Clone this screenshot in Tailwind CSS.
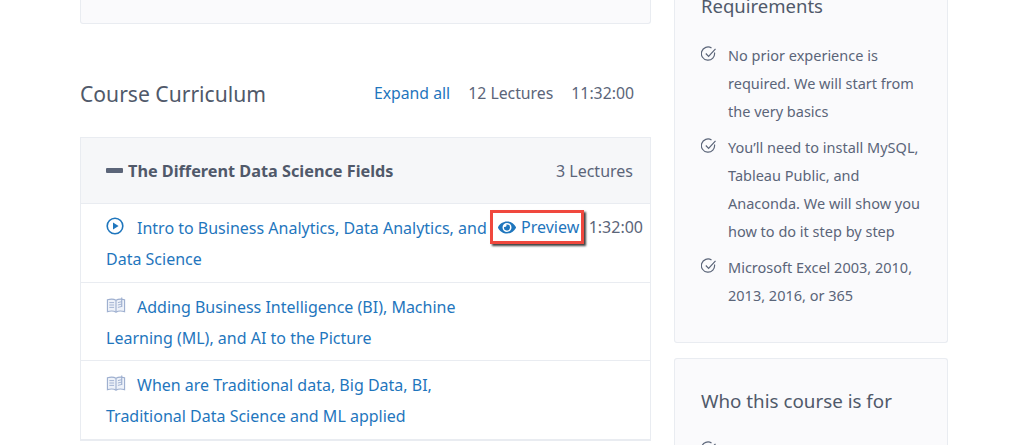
<!DOCTYPE html>
<html lang="en">

<head>
  <meta charset="UTF-8">
  <meta name="viewport" content="width=device-width, initial-scale=1.0">
  <script src="https://cdn.jsdelivr.net/npm/@tailwindcss/browser@4"></script>
  <title>Course Curriculum</title>
</head>

<body class="bg-white overflow-hidden h-[445px] font-['Noto_Sans','Open_Sans',sans-serif]">
  <div class="flex gap-[23px] pl-[80px] w-[948px] items-start">

    <!-- left column -->
    <div class="w-[571px] shrink-0">
      <div class="h-[24px] bg-[#fafafc] border border-t-0 border-[#e9ecf1] rounded-b-[3px]"></div>

      <div class="flex items-center justify-between mt-[55px] h-[30px] pr-[17px]">
        <h2 class="text-[21.100px] text-[#50596a]">Course Curriculum</h2>
        <div class="flex text-[15.800px] text-[#5b6579] gap-[18px]">
          <a href="#" class="text-[#1f76bd]">Expand all</a>
          <span>12 Lectures</span>
          <span>11:32:00</span>
        </div>
      </div>

      <div class="mt-[28px] border border-[#e9ecf1] border-b-2">
        <div class="h-[66px] bg-[#f6f7f9] border-b border-[#e9ecf1] flex items-center justify-between pl-[25px] pr-[17px]">
          <div class="flex items-center gap-[5px]">
            <span class="block w-[17px] h-[5px] bg-[#5b6579] rounded-[1px]"></span>
            <span class="pt-[1px] text-[16.250px] font-bold text-[#50596a]">The Different Data Science Fields</span>
          </div>
          <span class="pt-[1px] text-[16px] text-[#5b6579]">3 Lectures</span>
        </div>

        <div class="relative h-[79px] border-b border-[#e9ecf1] pl-[25px] pt-[9px] text-[16px] leading-[31px] text-[#1f76bd]">
          <div class="w-[390px]">
            <svg class="inline-block w-[18px] h-[18px] mr-[13px] align-[-1px]" viewBox="0 0 18 18" fill="none">
              <circle cx="9" cy="9" r="7.800" stroke="#1f76bd" stroke-width="1.600" />
              <path d="M7 5.400 12.600 9 7 12.600z" fill="#1f76bd" />
            </svg><a href="#">Intro to Business Analytics, Data Analytics, and Data Science</a>
          </div>
          <div class="absolute left-[409px] top-[6px] w-[153px] flex items-center justify-between">
            <a href="#" class="flex items-center gap-[5px] h-[34px] w-[94px] pl-[5px] border-[3px] border-[#f0483e] shadow-[2px_2px_2px_rgba(0,0,0,0.75)]">
              <svg class="w-[18px] h-[13px] shrink-0" viewBox="0 0 576 400" fill="#1f76bd">
                <path d="M572.500 185.400C518.300 79.600 410.900 8 288 8S57.700 79.700 3.500 185.400a32.400 32.400 0 0 0 0 29.200C57.700 320.400 165.100 392 288 392s230.300-71.700 284.500-177.400a32.400 32.400 0 0 0 0-29.200zM288 344c-79.500 0-144-64.500-144-144S208.500 56 288 56s144 64.500 144 144-64.500 144-144 144zm0-240a95.300 95.300 0 0 0-25.300 3.800 47.900 47.900 0 0 1-66.900 66.900A95.800 95.800 0 1 0 288 104z" />
              </svg>
              <span>Preview</span>
            </a>
            <span class="text-[#5b6579]">1:32:00</span>
          </div>
        </div>

        <div class="h-[78px] border-b border-[#e9ecf1] pl-[25px] pt-[9px] text-[16px] leading-[31px] text-[#1f76bd]">
          <div class="w-[390px]">
            <svg class="inline-block w-[20px] h-[18px] mr-[11px] align-[-1px]" viewBox="0 0 21 18" fill="none" stroke="#9fb0d0">
              <path d="M10.500 4C8 2.500 5 2.500 1.500 3.500V16c3.500-1 6.500-1 9 .5 2.500-1.500 5.500-1.500 9-.5V3.500c-3.500-1-6.500-1-9 .5zM10.500 4v12.500" stroke-width="1.200" fill="#eef2f9" />
              <path d="M3.500 6.500h5M3.500 9h5M3.500 11.500h5M12.500 6.500l4-1M12.500 9l4-1M12.500 11.500l4-1" stroke-width="1" />
              <path d="M16.500 1v10" stroke-width="1.200" />
            </svg><a href="#">Adding Business Intelligence (BI), Machine Learning (ML), and AI to the Picture</a>
          </div>
        </div>

        <div class="h-[78px] pl-[25px] pt-[9px] text-[16px] leading-[31px] text-[#1f76bd]">
          <div class="w-[390px]">
            <svg class="inline-block w-[20px] h-[18px] mr-[11px] align-[-1px]" viewBox="0 0 21 18" fill="none" stroke="#9fb0d0">
              <path d="M10.500 4C8 2.500 5 2.500 1.500 3.500V16c3.500-1 6.500-1 9 .5 2.500-1.500 5.500-1.500 9-.5V3.500c-3.500-1-6.500-1-9 .5zM10.500 4v12.500" stroke-width="1.200" fill="#eef2f9" />
              <path d="M3.500 6.500h5M3.500 9h5M3.500 11.500h5M12.500 6.500l4-1M12.500 9l4-1M12.500 11.500l4-1" stroke-width="1" />
              <path d="M16.500 1v10" stroke-width="1.200" />
            </svg><a href="#">When are Traditional data, Big Data, BI, Traditional Data Science and ML applied</a>
          </div>
        </div>
      </div>
    </div>

    <!-- right column -->
    <div class="w-[274px] shrink-0">
      <div class="h-[343px] bg-[#fafafc] border border-t-0 border-[#e9ecf1] rounded-b-[3px] pl-[26px] pr-[20px] overflow-hidden">
        <h3 class="text-[18.500px] leading-[24px] text-[#50596a] -mt-[6px]">Requirements</h3>
        <ul class="mt-[23px] text-[14.500px] leading-[28px] text-[#5b6579] flex flex-col gap-[8px]">
          <li class="flex gap-[11px]">
            <svg class="w-[16px] h-[16px] mt-[5px] shrink-0" viewBox="0 0 16 16" fill="none" stroke="#5b6579" stroke-width="1.200">
              <path d="M13.500 6.500A6.600 6.600 0 1 1 10.500 2" />
              <path d="M4.800 7.500 7.600 10.300 14.500 2.800" />
            </svg>
            <span>No prior experience is required. We will start from the very basics</span>
          </li>
          <li class="flex gap-[11px]">
            <svg class="w-[16px] h-[16px] mt-[5px] shrink-0" viewBox="0 0 16 16" fill="none" stroke="#5b6579" stroke-width="1.200">
              <path d="M13.500 6.500A6.600 6.600 0 1 1 10.500 2" />
              <path d="M4.800 7.500 7.600 10.300 14.500 2.800" />
            </svg>
            <span>You’ll need to install MySQL, Tableau Public, and Anaconda. We will show you how to do it step by step</span>
          </li>
          <li class="flex gap-[11px]">
            <svg class="w-[16px] h-[16px] mt-[5px] shrink-0" viewBox="0 0 16 16" fill="none" stroke="#5b6579" stroke-width="1.200">
              <path d="M13.500 6.500A6.600 6.600 0 1 1 10.500 2" />
              <path d="M4.800 7.500 7.600 10.300 14.500 2.800" />
            </svg>
            <span>Microsoft Excel 2003, 2010, 2013, 2016, or 365</span>
          </li>
        </ul>
      </div>

      <div class="mt-[15px] h-[120px] bg-[#fafafc] border border-b-0 border-[#e9ecf1] rounded-t-[3px] pl-[26px] pt-[28px] overflow-hidden">
        <h3 class="text-[18.800px] leading-[28px] text-[#50596a]">Who this course is for</h3>
        <div class="mt-[26px]">
          <svg class="w-[16px] h-[16px]" viewBox="0 0 16 16" fill="none" stroke="#5b6579" stroke-width="1.200">
            <path d="M13.500 6.500A6.600 6.600 0 1 1 10.500 2" />
            <path d="M4.800 7.500 7.600 10.300 14.500 2.800" />
          </svg>
        </div>
      </div>
    </div>
  </div>
</body>

</html>
